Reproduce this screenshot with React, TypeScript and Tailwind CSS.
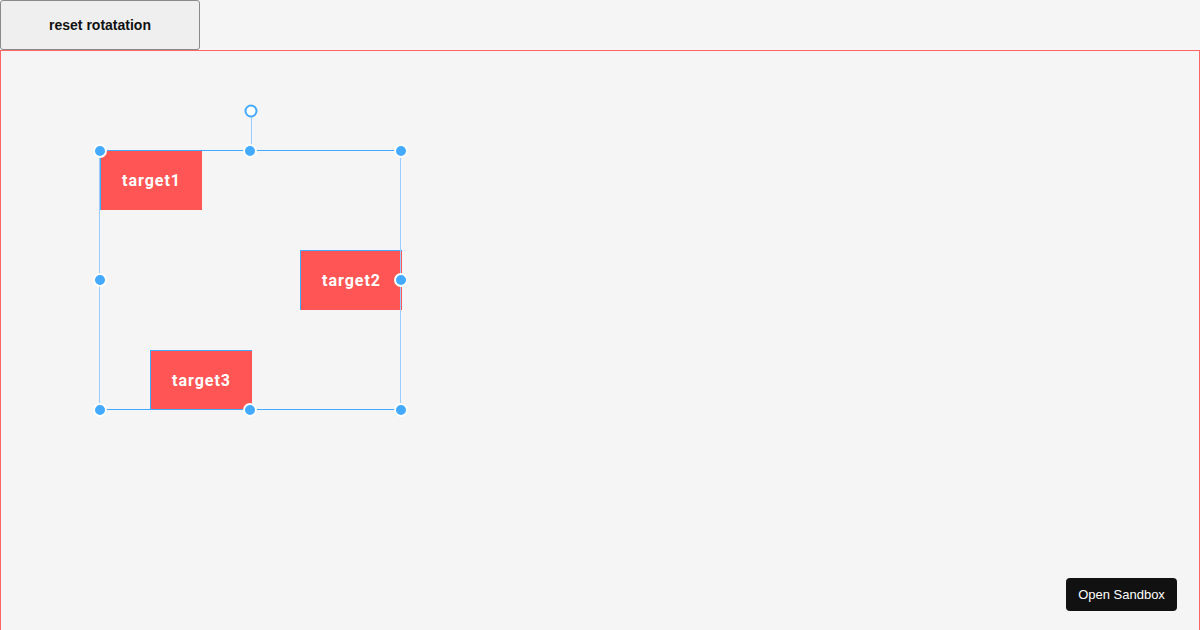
import React from "react";

const Dot = ({ x, y }: { x: string; y: string }) => (
  <div
    className="absolute w-[14px] h-[14px] rounded-full bg-[#4af] border-2 border-white -translate-x-1/2 -translate-y-1/2"
    style={{ left: x, top: y }}
  />
);

const Target = ({ x, y, label }: { x: number; y: number; label: string }) => (
  <div
    className="absolute w-[102px] h-[60px] bg-[#f55] flex items-center justify-center text-white font-bold text-[16px] tracking-[1px] border-l border-t border-[#4af]"
    style={{ left: x, top: y, fontFamily: "Roboto, 'Liberation Sans', sans-serif" }}
  >
    {label}
  </div>
);

const L = "calc(0% - 0.5px)";
const M = "50%";
const R = "calc(100% + 0.5px)";

export default function App() {
  return (
    <div className="w-[1200px] h-[630px] overflow-hidden bg-[#f5f5f5] relative">
      <button
        className="block w-[200px] h-[50px] bg-[#efefef] border border-[#8a8a8a] rounded-[3px] text-[14px] font-bold text-[#111]"
        style={{ fontFamily: "'Liberation Sans', Arial, sans-serif" }}
      >
        reset rotatation
      </button>
      <div className="relative w-[1200px] h-[700px] border border-[#f66]">
        <Target x={99} y={99} label="target1" />
        <Target x={299} y={199} label="target2" />
        <Target x={149} y={299} label="target3" />
        {/* moveable control box */}
        <div className="absolute left-[98px] top-[99px] w-[302px] h-[260px] border-x border-x-[#9cf] border-y border-y-[#4af] pointer-events-none">
          <div className="absolute left-[calc(50%+0.5px)] -top-[34px] w-px h-[34px] bg-[#9cf]" />
          <div className="absolute left-[calc(50%+0.5px)] -top-[40px] w-[13px] h-[13px] rounded-full bg-white border-2 border-[#4af] -translate-x-1/2 -translate-y-1/2" />
          <Dot x={L} y={L} />
          <Dot x={M} y={L} />
          <Dot x={R} y={L} />
          <Dot x={L} y={M} />
          <Dot x={R} y={M} />
          <Dot x={L} y={R} />
          <Dot x={M} y={R} />
          <Dot x={R} y={R} />
        </div>
      </div>
      <button
        className="absolute right-[23px] bottom-[19px] w-[111px] h-[33px] bg-[#111] rounded-[4px] text-white text-[13px]"
        style={{ fontFamily: "'Liberation Sans', Arial, sans-serif" }}
      >
        Open Sandbox
      </button>
    </div>
  );
}
